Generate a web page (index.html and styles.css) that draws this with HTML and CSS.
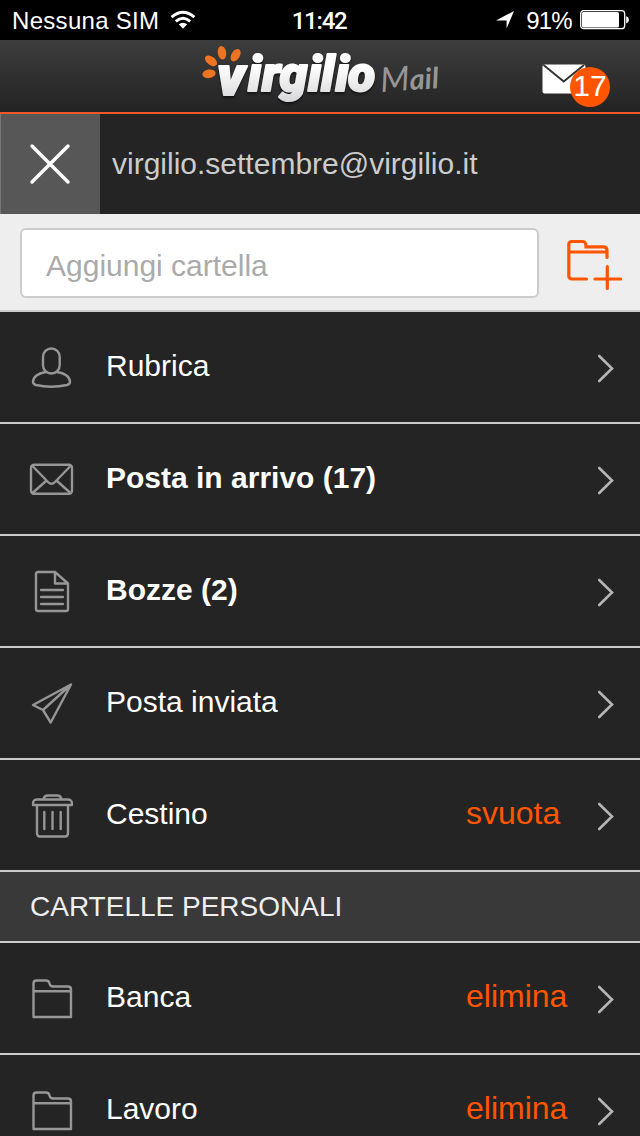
FILE: index.html
```html
<!DOCTYPE html>
<html lang="it">
<head>
<meta charset="utf-8">
<title>Virgilio Mail</title>
<link rel="stylesheet" href="styles.css">
</head>
<body>
<svg class="defs" aria-hidden="true">
  <symbol id="chevron" viewBox="0 0 18 30"><path d="M3.2 3L16 15.5L3.2 28"/></symbol>
  <symbol id="folder" viewBox="0 0 46 46"><path d="M4.5 41V7.5Q4.5 4.5 7.5 4.5H17Q20 4.5 20.5 7.5Q21.2 10.5 24 10.5H39Q42 10.5 42 13.5V41H4.5M4.5 15.3H42"/></symbol>
</svg>
<div class="screen">
  <div class="status">
    <span class="carrier">Nessuna SIM</span>
    <svg class="wifi" width="26" height="20" viewBox="0 0 26 20"><g fill="none" stroke="#fff" stroke-width="3"><path d="M1.6 7.2Q13-2.8 24.4 7.2"/><path d="M5.8 11.4Q13 5.2 20.2 11.4"/></g><path d="M8.8 14.3Q13 11 17.2 14.3L13 18.7Z" fill="#fff"/></svg>
    <span class="time">11:42</span>
    <svg class="location" width="18" height="18" viewBox="0 0 18 18"><path d="M18 0L10.6 17.6V9.4H0Z" fill="#fff"/></svg>
    <span class="percent">91%</span>
    <svg class="battery" width="50" height="20" viewBox="0 0 50 20"><rect x=".7" y=".7" width="44" height="18" rx="3" fill="none" stroke="#fff" stroke-width="1.3"/><rect x="2" y="2" width="37" height="15.5" rx="1.5" fill="#fff"/><path d="M46.2 6Q49 7 49 9.7T46.2 13.5Z" fill="#fff"/></svg>
  </div>
  <header class="header">
    <svg class="logo" width="246" height="72" viewBox="0 0 246 72">
      <defs><linearGradient id="silver" x1="0" y1="0" x2="0" y2="1"><stop offset=".35" stop-color="#fff"/><stop offset="1" stop-color="#cfcfd2"/></linearGradient></defs>
      <g fill="#ee7420"><ellipse cx="9" cy="33.8" rx="6.7" ry="4.3" transform="rotate(-9 9 33.8)"/><ellipse cx="11" cy="20.8" rx="6.9" ry="4.2" transform="rotate(38 11 20.8)"/><ellipse cx="22" cy="12.8" rx="4.2" ry="6.8" transform="rotate(-9 22 12.8)"/><ellipse cx="35.6" cy="15.2" rx="4.2" ry="6.8" transform="rotate(32 35.6 15.2)"/></g>
      <text class="brand" x="17 48 62 79.5 108 121 135.5 148" y="55 51 51 51 51 51 51 51"><tspan class="initial">v</tspan>irgilio</text>
      <text class="product" x="181" y="52" transform="rotate(-4 181 52)"><tspan class="capital">M</tspan>ail</text>
    </svg>
    <div class="inbox">
      <svg width="44" height="30" viewBox="0 0 44 30"><rect x=".5" y=".5" width="43" height="29" rx="2" fill="#fff"/><path d="M1.5 1L21.7 17.5L42 1" fill="none" stroke="#333" stroke-width="2"/></svg>
      <span class="badge">17</span>
    </div>
  </header>
  <div class="account">
    <div class="close"><svg width="42" height="42" viewBox="0 0 42 42"><path d="M3 3L39 39M39 3L3 39" stroke="#fff" stroke-width="3.4" stroke-linecap="round"/></svg></div>
    <span class="email">virgilio.settembre@virgilio.it</span>
  </div>
  <div class="add">
    <input class="field" type="text" placeholder="Aggiungi cartella">
    <svg class="add-icon" width="56" height="52" viewBox="0 0 56 52"><path d="M20.5 40H6Q2.8 40 2.8 36.8V5.5Q2.8 2.5 6 2.5H17Q20 2.5 20 7.8H37.5Q41 7.8 41 11.5V18.5M2.8 13H40M29 40H54.5M41.3 27.5V49.5"/></svg>
  </div>
  <div class="row"><svg class="icon" viewBox="0 0 46 46"><rect x="14" y="3.5" width="16.7" height="25" rx="8.3"/><path d="M17 27C9 28 4 32 4 37Q4 39 7 40Q22 43.5 38 40Q41 39 41 37C41 32 36 28 28 27"/></svg><span class="name">Rubrica</span><svg class="chevron"><use href="#chevron"/></svg></div>
  <div class="row unread"><svg class="icon" viewBox="0 0 46 46"><rect x="2" y="7.8" width="41" height="29" rx="3"/><path d="M3.5 9L19 25Q22.5 28.5 26 25L41.5 9M3.5 36L17 24M41.5 36L28 24"/></svg><span class="name">Posta in arrivo (17)</span><svg class="chevron"><use href="#chevron"/></svg></div>
  <div class="row unread"><svg class="icon" viewBox="0 0 46 46"><path d="M9 3H26L39 14.5V40Q39 42 37 42H9Q7 42 7 40V5Q7 3 9 3M26 3V14.5H39M12 21H34M12 28H34M12 35H34"/></svg><span class="name">Bozze (2)</span><svg class="chevron"><use href="#chevron"/></svg></div>
  <div class="row"><svg class="icon" viewBox="0 0 46 46"><path d="M42 3.5L4 24L14 29L21.7 41.5L42 3.5L14 29"/></svg><span class="name">Posta inviata</span><svg class="chevron"><use href="#chevron"/></svg></div>
  <div class="row"><svg class="icon" viewBox="0 0 46 46"><path d="M4 12Q3.5 6.5 8 6.5H39Q43.5 6.5 43 12H4M14.5 6.5Q15 2.5 19 2.5H28Q32 2.5 32.5 6.5M8 12V40Q8 43.5 11 43.5H36Q39 43.5 39 40V12M15.3 19V36M23.5 19V36M31.7 19V36"/></svg><span class="name">Cestino</span><span class="action">svuota</span><svg class="chevron"><use href="#chevron"/></svg></div>
  <div class="section">CARTELLE PERSONALI</div>
  <div class="row"><svg class="icon"><use href="#folder"/></svg><span class="name">Banca</span><span class="action">elimina</span><svg class="chevron"><use href="#chevron"/></svg></div>
  <div class="row"><svg class="icon"><use href="#folder"/></svg><span class="name">Lavoro</span><span class="action">elimina</span><svg class="chevron"><use href="#chevron"/></svg></div>
</div>
</body>
</html>
```
FILE: styles.css
```css
* { box-sizing: border-box; }
body { margin: 0; background: #242424; }
.defs { display: none; }
.screen { width: 640px; height: 1136px; overflow: hidden; font-family: "Liberation Sans", Arial, sans-serif; font-size: 30px; line-height: 34px; color: #fff; white-space: nowrap; }
.screen svg { flex: none; display: block; }
.status { height: 40px; padding: 0 10px 0 12px; display: flex; align-items: center; background: #000; font-size: 24px; }
.carrier { width: 158px; padding-top: 2px; letter-spacing: .3px; }
.time { margin-left: 96px; width: 205px; padding-top: 2px; font-family: "Roboto", sans-serif; font-weight: 500; letter-spacing: -1.2px; }
.percent { margin-left: 12px; width: 54px; padding-top: 2px; letter-spacing: -.8px; }
.header { height: 74px; padding: 0 30px 0 200px; display: flex; align-items: flex-start; justify-content: space-between; background: linear-gradient(#3d3d3d, #232323); border-bottom: 2px solid #ee5826; }
.brand { font: italic 900 50px "Roboto", sans-serif; fill: url(#silver); stroke: url(#silver); stroke-width: 2px; stroke-linejoin: round; filter: drop-shadow(0 2px 1px #0008); }
.initial { font-size: 56px; }
.product { font: italic 700 29px "Lato", sans-serif; fill: #969696; }
.capital { font-size: 34px; font-weight: 400; }
.inbox { display: flex; margin-top: 24px; }
.badge { width: 40px; height: 40px; margin: 3px 0 0 -16px; border-radius: 50%; background: #ff5500; text-align: center; line-height: 38px; z-index: 1; }
.account { height: 100px; display: flex; align-items: center; background: #242424; color: #ccc; }
.close { width: 100px; height: 100px; padding-right: 1px; display: grid; place-items: center; background: #575757; border-left: 1px solid #777; }
.email { margin-left: 12px; }
.add { height: 98px; padding: 0 18px 0 20px; display: flex; align-items: center; justify-content: space-between; background: #eee; border-bottom: 2px solid #ccc; }
.field { width: 519px; height: 70px; margin-top: 2px; padding: 6px 24px 0; border: 2px solid #ccc; border-radius: 6px; background: #fff; font: inherit; outline: 0; }
.field::placeholder { color: #aaa; opacity: 1; }
.add-icon { margin-top: 5px; fill: none; stroke: #ff5500; stroke-width: 3.2; stroke-linecap: round; }
.row { height: 112px; padding: 0 26px 0 29px; display: flex; align-items: center; background: #242424; border-bottom: 2px solid #ccc; }
.icon { width: 46px; height: 46px; margin-top: 1px; fill: none; stroke: #969696; stroke-width: 2.4; stroke-linejoin: round; stroke-linecap: round; }
.name { margin: 0 auto 2px 31px; }
.unread .name { font-weight: 700; }
.action { width: 130px; margin-bottom: 5px; color: #ff5500; font-size: 32px; }
.chevron { width: 18px; height: 30px; margin-top: 1px; fill: none; stroke: #b5b5b5; stroke-width: 2.6; stroke-linecap: round; }
.section { height: 71px; padding: 0 30px; line-height: 69px; background: #393939; border-bottom: 2px solid #ccc; color: #eee; font-size: 28px; }
```
